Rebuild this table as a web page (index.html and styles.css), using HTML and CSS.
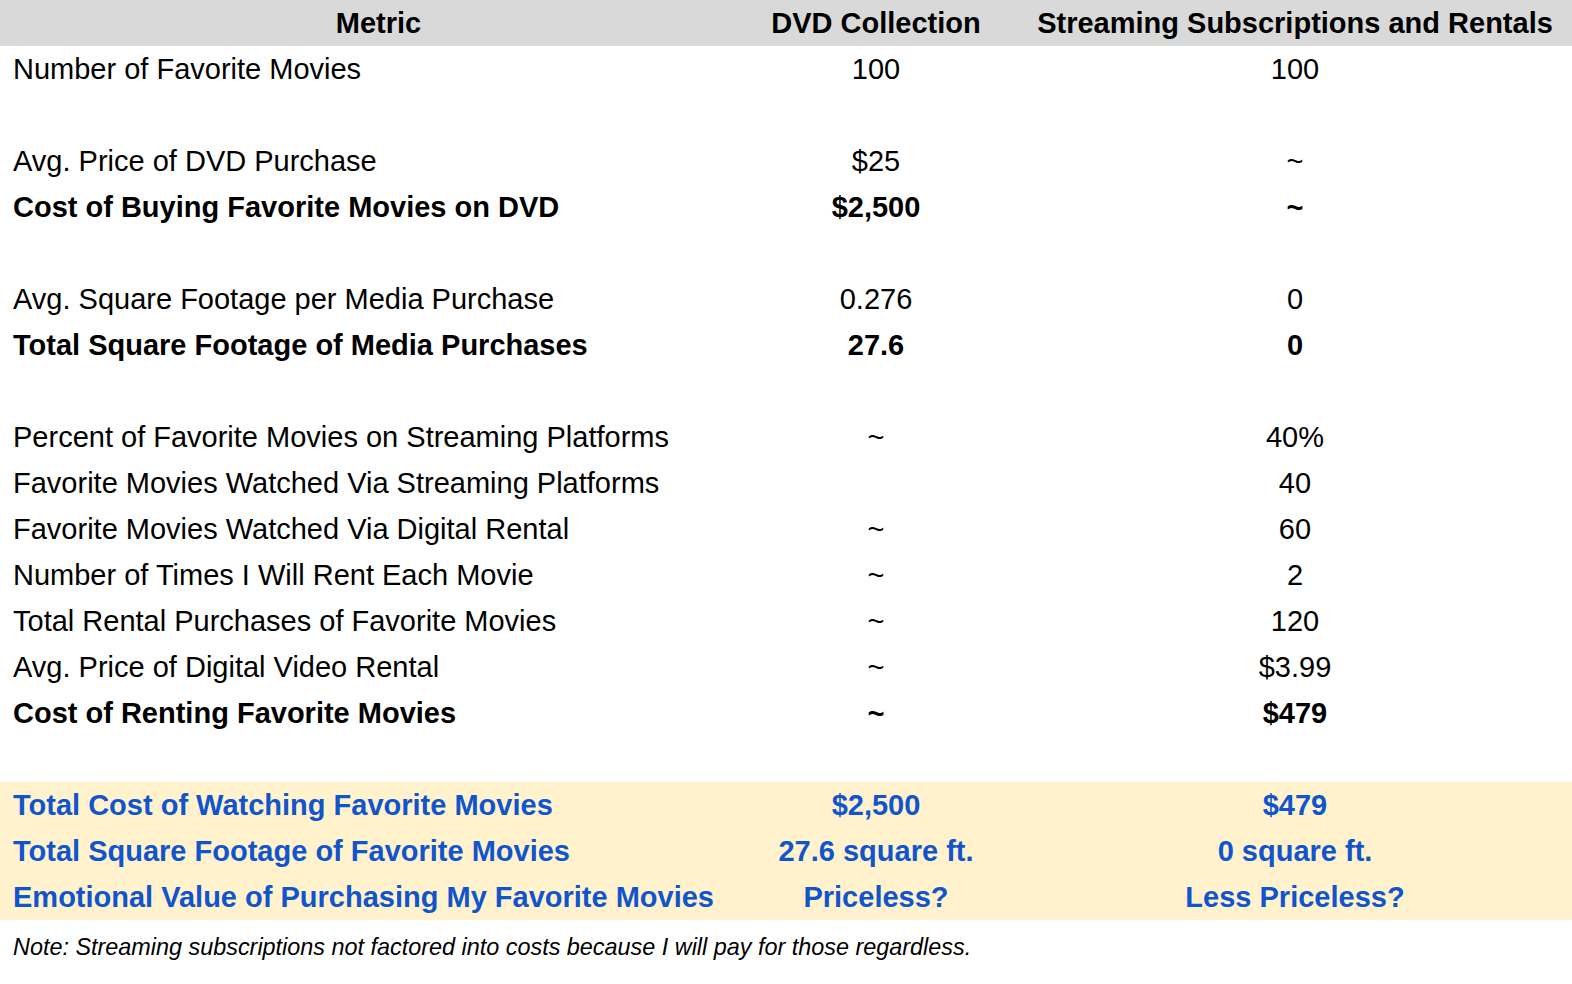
FILE: index.html
```html
<!DOCTYPE html>
<html>
<head>
<meta charset="utf-8">
<link rel="stylesheet" href="styles.css">
</head>
<body>
<div class="sheet">
  <div class="row head"><div class="c1">Metric</div><div class="c2">DVD Collection</div><div class="c3">Streaming Subscriptions and Rentals</div></div>
  <div class="row"><div class="c1 l">Number of Favorite Movies</div><div class="c2">100</div><div class="c3">100</div></div>
  <div class="row"><div class="c1 l"></div><div class="c2"></div><div class="c3"></div></div>
  <div class="row"><div class="c1 l">Avg. Price of DVD Purchase</div><div class="c2">$25</div><div class="c3">~</div></div>
  <div class="row b"><div class="c1 l">Cost of Buying Favorite Movies on DVD</div><div class="c2">$2,500</div><div class="c3">~</div></div>
  <div class="row"><div class="c1 l"></div><div class="c2"></div><div class="c3"></div></div>
  <div class="row"><div class="c1 l">Avg. Square Footage per Media Purchase</div><div class="c2">0.276</div><div class="c3">0</div></div>
  <div class="row b"><div class="c1 l">Total Square Footage of Media Purchases</div><div class="c2">27.6</div><div class="c3">0</div></div>
  <div class="row"><div class="c1 l"></div><div class="c2"></div><div class="c3"></div></div>
  <div class="row"><div class="c1 l">Percent of Favorite Movies on Streaming Platforms</div><div class="c2">~</div><div class="c3">40%</div></div>
  <div class="row"><div class="c1 l">Favorite Movies Watched Via Streaming Platforms</div><div class="c2"></div><div class="c3">40</div></div>
  <div class="row"><div class="c1 l">Favorite Movies Watched Via Digital Rental</div><div class="c2">~</div><div class="c3">60</div></div>
  <div class="row"><div class="c1 l">Number of Times I Will Rent Each Movie</div><div class="c2">~</div><div class="c3">2</div></div>
  <div class="row"><div class="c1 l">Total Rental Purchases of Favorite Movies</div><div class="c2">~</div><div class="c3">120</div></div>
  <div class="row"><div class="c1 l">Avg. Price of Digital Video Rental</div><div class="c2">~</div><div class="c3">$3.99</div></div>
  <div class="row b"><div class="c1 l">Cost of Renting Favorite Movies</div><div class="c2">~</div><div class="c3">$479</div></div>
  <div class="row"><div class="c1 l"></div><div class="c2"></div><div class="c3"></div></div>
  <div class="row b hl"><div class="c1 l">Total Cost of Watching Favorite Movies</div><div class="c2">$2,500</div><div class="c3">$479</div></div>
  <div class="row b hl"><div class="c1 l">Total Square Footage of Favorite Movies</div><div class="c2">27.6 square ft.</div><div class="c3">0 square ft.</div></div>
  <div class="row b hl"><div class="c1 l">Emotional Value of Purchasing My Favorite Movies</div><div class="c2">Priceless?</div><div class="c3">Less Priceless?</div></div>
  <div class="note">Note: Streaming subscriptions not factored into costs because I will pay for those regardless.</div>
</div>
</body>
</html>
```
FILE: styles.css
```css
html, body {
  margin: 0;
  padding: 0;
  background: #ffffff;
  overflow: hidden;
}
body {
  font-family: "Liberation Sans", Arial, sans-serif;
  color: #000000;
}
.sheet {
  width: 1600px;
}
.row {
  display: grid;
  grid-template-columns: 757px 238px 600px;
  height: 46px;
  align-items: center;
  font-size: 29px;
}
.row > div {
  text-align: center;
  white-space: nowrap;
  padding-top: 1px;
}
.row > .l {
  text-align: left;
  padding-left: 13px;
}
.head {
  background: #d9d9d9;
  font-weight: bold;
}
.b {
  font-weight: bold;
}
.hl {
  background: #fff2cc;
  color: #1155cc;
}
.note {
  font-style: italic;
  font-size: 23.4px;
  padding-left: 13px;
  padding-top: 4px;
  height: 42px;
  line-height: 46px;
}
```
